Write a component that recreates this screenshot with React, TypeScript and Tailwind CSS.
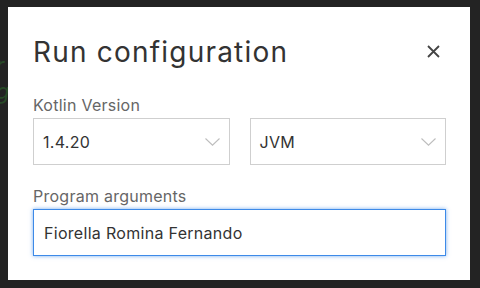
import React from "react";

function Chevron() {
  return (
    <svg width="15" height="8" viewBox="0 0 15 8" fill="none" className="shrink-0">
      <path d="M0.5 0.5 L7.5 7.2 L14.5 0.5" stroke="#bdbdbd" strokeWidth="1.1" />
    </svg>
  );
}

function Select({ value }: { value: string }) {
  return (
    <div className="flex-1 h-[47px] border border-[#cfcfcf] flex items-center justify-between pl-[9px] pr-[9px]">
      <span className="text-[16px] tracking-[0.3px] text-[#333]">{value}</span>
      <Chevron />
    </div>
  );
}

export default function App() {
  return (
    <div
      className="relative w-[480px] h-[288px] bg-[#232323] pt-[7px] pl-[8px] overflow-hidden"
      style={{ fontFamily: "Inter, 'Open Sans', sans-serif" }}
    >
      <div className="absolute left-[-4px] top-[52px] text-[22px] leading-[26px] text-[#274a27] italic">
        <div>r</div>
        <div>g</div>
      </div>
      <div className="relative w-[462px] h-[273px] bg-white pt-[28px] pl-[25px] pr-[24px]">
        <div className="flex items-center justify-between">
          <h1 className="text-[28px] leading-[34px] text-[#333] tracking-[1.2px]">Run configuration</h1>
          <svg width="13" height="13" viewBox="0 0 13 13" className="mr-[6px] mt-[-1px]">
            <path d="M1 1 L12 12 M12 1 L1 12" stroke="#444" strokeWidth="1.8" />
          </svg>
        </div>
        <div className="mt-[26px] text-[16px] leading-[20px] tracking-[0.25px] text-[#666]">Kotlin Version</div>
        <div className="mt-[3px] flex gap-[20px]">
          <Select value="1.4.20" />
          <Select value="JVM" />
        </div>
        <div className="mt-[21px] text-[16px] leading-[20px] tracking-[0.25px] text-[#666]">Program arguments</div>
        <div className="mt-[3px] h-[47px] border border-[#3d8ae8] shadow-[0_0_4px_rgba(61,138,232,0.7)] flex items-center pl-[10px]">
          <span className="text-[16px] tracking-[0.3px] text-[#333]">Fiorella Romina Fernando</span>
        </div>
      </div>
    </div>
  );
}
